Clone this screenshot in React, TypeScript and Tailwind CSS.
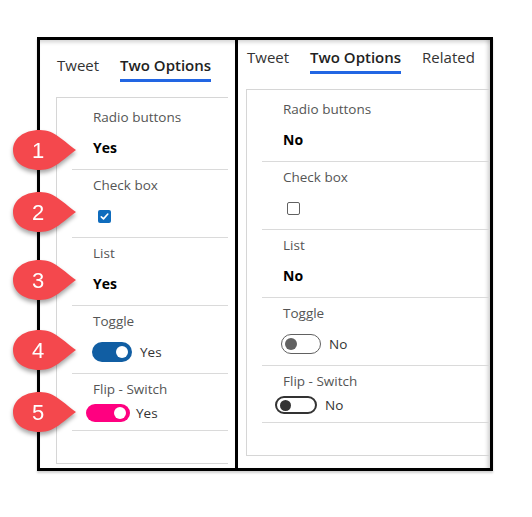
import type { ReactNode } from 'react';

const font = { fontFamily: '"Open Sans", "Noto Sans", sans-serif' };

const Field = ({ label, children, compact }: { label: string; children: ReactNode; compact?: boolean }) => (
  <div className={compact ? 'ml-[15px] pt-[5px] pb-[8px] border-b border-[#dadada]' : 'ml-[15px] pt-[5px] pb-[11px] border-b border-[#dadada]'}>
    <div className="pl-[21px]">
      <div className="h-5 leading-5 text-[13.5px] text-[#555]">{label}</div>
      <div className={compact ? 'mt-[5px] h-[18px] flex items-center' : 'mt-[11px] h-5 flex items-center'}>{children}</div>
    </div>
  </div>
);

const Value = ({ children }: { children: ReactNode }) => (
  <span className="text-[14px] font-bold text-black leading-5">{children}</span>
);

const Checkbox = ({ checked }: { checked: boolean }) =>
  checked ? (
    <span className="ml-[5px] w-[13px] h-[13px] rounded-[2px] bg-[#0f6cbd] flex items-center justify-center">
      <svg width="9" height="9" viewBox="0 0 9 9">
        <path d="M1.3 4.8 L3.5 6.9 L7.8 2" fill="none" stroke="white" strokeWidth="1.6" strokeLinecap="round" strokeLinejoin="round" />
      </svg>
    </span>
  ) : (
    <span className="ml-[4px] w-[13px] h-[13px] rounded-[2px] border border-[#616161] bg-white" />
  );

const Toggle = ({ on }: { on: boolean }) =>
  on ? (
    <div className="flex items-center">
      <span className="-ml-[1px] w-10 h-5 rounded-full bg-[#115ea3] flex items-center justify-end pr-[4px]">
        <span className="w-3 h-3 rounded-full bg-white" />
      </span>
      <span className="ml-[8px] text-[13.5px] text-[#333]">Yes</span>
    </div>
  ) : (
    <div className="flex items-center">
      <span className="-ml-[2px] w-10 h-5 rounded-full border border-[#616161] bg-white flex items-center pl-[3px]">
        <span className="w-3 h-3 rounded-full bg-[#616161]" />
      </span>
      <span className="ml-[8px] text-[13.5px] text-[#333]">No</span>
    </div>
  );

const Flip = ({ on }: { on: boolean }) =>
  on ? (
    <div className="flex items-center">
      <span className="-ml-[7px] w-[44px] h-[18px] rounded-full bg-[#ff0080] flex items-center justify-end pr-[4px]">
        <span className="w-3 h-3 rounded-full bg-white" />
      </span>
      <span className="ml-[6px] text-[13.5px] text-[#333]">Yes</span>
    </div>
  ) : (
    <div className="flex items-center">
      <span className="-ml-[8px] w-[42px] h-[18px] rounded-full border-2 border-[#333] bg-white flex items-center pl-[3px]">
        <span className="w-[11px] h-[11px] rounded-full bg-[#333]" />
      </span>
      <span className="ml-[8px] text-[13.5px] text-[#333]">No</span>
    </div>
  );

const Tabs = ({ tabs }: { tabs: string[] }) => (
  <div className="flex gap-[21px] text-[15px] leading-[22px]">
    {tabs.map((t) =>
      t === 'Two Options' ? (
        <div key={t} className="pb-[3px] border-b-[3px] border-[#2266e3] font-semibold text-[#222]">{t}</div>
      ) : (
        <div key={t} className="pb-[3px] text-[#333]">{t}</div>
      )
    )}
  </div>
);

// numbered callouts drawn over the left form
const Markers = () => {
  const ys = [150, 212, 280, 350, 412];
  return (
    <>
      {ys.map((y, i) => (
        <svg
          key={i}
          width="72"
          height="50"
          viewBox="0 0 72 50"
          className="absolute left-[10px] drop-shadow-[0_3px_2px_rgba(0,0,0,0.35)]"
          style={{ top: y - 22 }}
        >
          <path
            d="M66 22 C53 13 45 2 30 2 C13 2 3 11 3 22 C3 33 13 42 30 42 C45 42 53 31 66 22 Z"
            fill="#f4484d"
          />
          <text
            x="28"
            y="30"
            textAnchor="middle"
            fontSize="22"
            fill="white"
            style={{ fontFamily: '"Liberation Sans", Arial, sans-serif' }}
          >
            {i + 1}
          </text>
        </svg>
      ))}
    </>
  );
};

export default function App() {
  return (
    <div className="relative w-[532px] h-[517px] bg-white" style={font}>
      <div className="pt-[37px] pl-[37px]">
        <div className="flex w-[456px] h-[434px] border-[3px] border-black shadow-[0_2px_2px_rgba(0,0,0,0.18)]">
          {/* left form */}
          <div className="w-[195px] overflow-hidden pl-[16px] pt-[14px] shadow-[inset_0_5px_4px_-3px_rgba(0,0,0,0.18)]">
            <div className="pl-[1px]">
              <Tabs tabs={['Tweet', 'Two Options']} />
            </div>
            <div className="mt-[15px] w-[172px] border-l border-t border-b border-[#d6d6d6] pt-[4px] pb-[32px]">
              <Field label="Radio buttons"><Value>Yes</Value></Field>
              <Field label="Check box"><Checkbox checked /></Field>
              <Field label="List"><Value>Yes</Value></Field>
              <Field label="Toggle"><Toggle on /></Field>
              <Field label="Flip - Switch" compact><Flip on /></Field>
            </div>
          </div>
          <div className="w-[3px] bg-black" />
          {/* right form */}
          <div className="flex-1 overflow-hidden pl-[8px] pt-[6px] shadow-[inset_0_5px_4px_-3px_rgba(0,0,0,0.18),inset_-5px_0_4px_-3px_rgba(0,0,0,0.2)]">
            <div className="pl-[1px]">
              <Tabs tabs={['Tweet', 'Two Options', 'Related']} />
            </div>
            <div className="mt-[15px] w-[260px] border-l border-t border-b border-[#d6d6d6] pt-[4px] pb-[32px]">
              <Field label="Radio buttons"><Value>No</Value></Field>
              <Field label="Check box"><Checkbox checked={false} /></Field>
              <Field label="List"><Value>No</Value></Field>
              <Field label="Toggle"><Toggle on={false} /></Field>
              <Field label="Flip - Switch" compact><Flip on={false} /></Field>
            </div>
          </div>
        </div>
      </div>
      <Markers />
    </div>
  );
}
